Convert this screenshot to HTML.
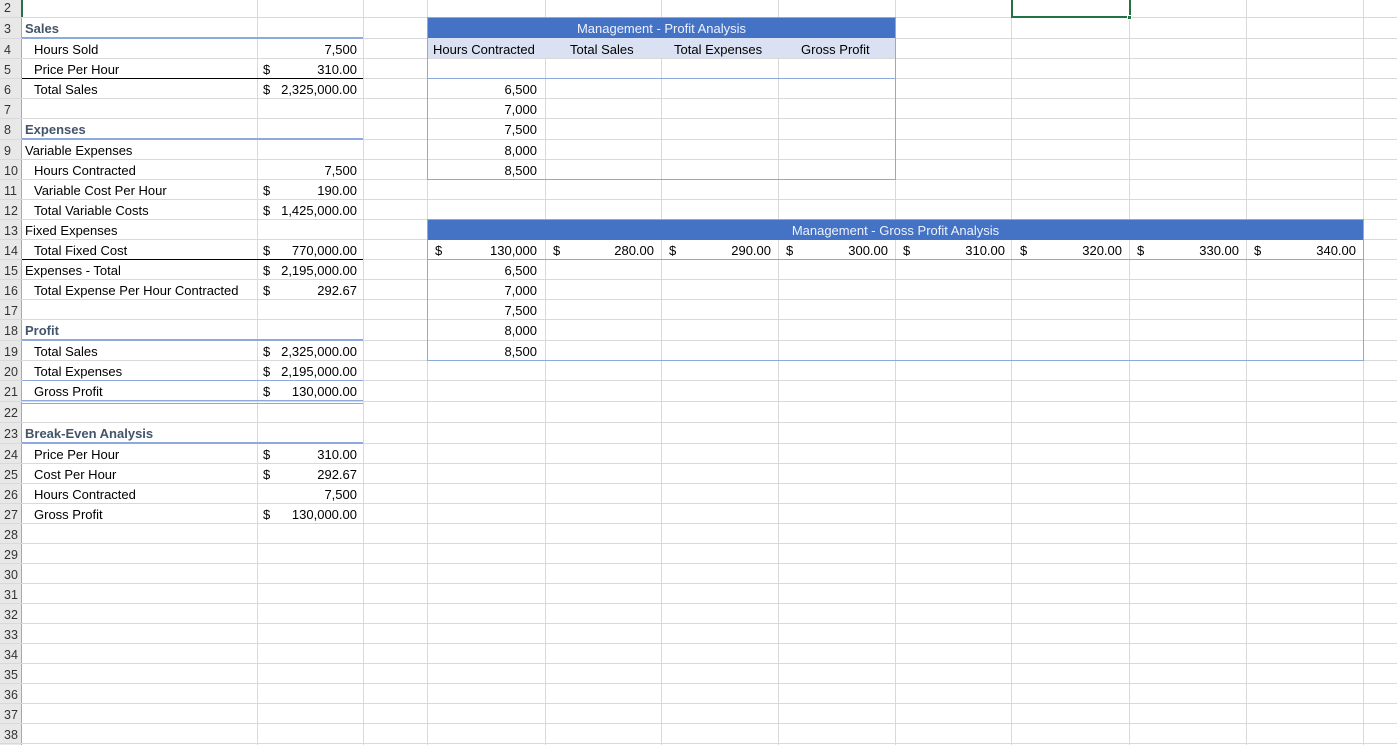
<!DOCTYPE html>
<html><head><meta charset="utf-8"><style>
body{margin:0;width:1397px;height:745px;overflow:hidden;background:#fff;position:relative;font-family:"Liberation Sans",sans-serif;font-size:13px;color:#000}
div{position:absolute;box-sizing:border-box}
.h{left:0;width:1397px;height:1px;background:#d9d9d9}
.v{top:0;width:1px;height:745px;background:#d9d9d9}
.t{height:20px;line-height:22px;white-space:nowrap}
.r{text-align:right}
.rh{left:0;width:22px;padding-left:4px;color:#333;height:20px;line-height:22px;font-size:12.5px}
.hd{color:#44546a;font-weight:bold}
.bl{height:2px;background:#8ea9db}
</style></head><body>
<div style="left:0;top:0;width:22px;height:745px;background:#e8e8e8;border-right:1px solid #a8a8a8"></div>
<div class="h" style="top:17px"></div><div class="h" style="top:38px"></div><div class="h" style="top:58px"></div><div class="h" style="top:78px"></div><div class="h" style="top:98px"></div><div class="h" style="top:118px"></div><div class="h" style="top:139px"></div><div class="h" style="top:159px"></div><div class="h" style="top:179px"></div><div class="h" style="top:199px"></div><div class="h" style="top:219px"></div><div class="h" style="top:239px"></div><div class="h" style="top:259px"></div><div class="h" style="top:279px"></div><div class="h" style="top:299px"></div><div class="h" style="top:319px"></div><div class="h" style="top:340px"></div><div class="h" style="top:360px"></div><div class="h" style="top:380px"></div><div class="h" style="top:401px"></div><div class="h" style="top:422px"></div><div class="h" style="top:443px"></div><div class="h" style="top:463px"></div><div class="h" style="top:483px"></div><div class="h" style="top:503px"></div><div class="h" style="top:523px"></div><div class="h" style="top:543px"></div><div class="h" style="top:563px"></div><div class="h" style="top:583px"></div><div class="h" style="top:603px"></div><div class="h" style="top:623px"></div><div class="h" style="top:643px"></div><div class="h" style="top:663px"></div><div class="h" style="top:683px"></div><div class="h" style="top:703px"></div><div class="h" style="top:723px"></div><div class="h" style="top:743px"></div>
<div class="v" style="left:257px"></div><div class="v" style="left:363px"></div><div class="v" style="left:427px"></div><div class="v" style="left:545px"></div><div class="v" style="left:661px"></div><div class="v" style="left:778px"></div><div class="v" style="left:895px"></div><div class="v" style="left:1011px"></div><div class="v" style="left:1129px"></div><div class="v" style="left:1246px"></div><div class="v" style="left:1363px"></div>
<div style="left:21px;top:0;width:2px;height:17px;background:#217346"></div>

<div class="rh" style="top:-3px">2</div><div class="rh" style="top:18px">3</div><div class="rh" style="top:39px">4</div><div class="rh" style="top:59px">5</div><div class="rh" style="top:79px">6</div><div class="rh" style="top:99px">7</div><div class="rh" style="top:119px">8</div><div class="rh" style="top:140px">9</div><div class="rh" style="top:160px">10</div><div class="rh" style="top:180px">11</div><div class="rh" style="top:200px">12</div><div class="rh" style="top:220px">13</div><div class="rh" style="top:240px">14</div><div class="rh" style="top:260px">15</div><div class="rh" style="top:280px">16</div><div class="rh" style="top:300px">17</div><div class="rh" style="top:320px">18</div><div class="rh" style="top:341px">19</div><div class="rh" style="top:361px">20</div><div class="rh" style="top:381px">21</div><div class="rh" style="top:402px">22</div><div class="rh" style="top:423px">23</div><div class="rh" style="top:444px">24</div><div class="rh" style="top:464px">25</div><div class="rh" style="top:484px">26</div><div class="rh" style="top:504px">27</div><div class="rh" style="top:524px">28</div><div class="rh" style="top:544px">29</div><div class="rh" style="top:564px">30</div><div class="rh" style="top:584px">31</div><div class="rh" style="top:604px">32</div><div class="rh" style="top:624px">33</div><div class="rh" style="top:644px">34</div><div class="rh" style="top:664px">35</div><div class="rh" style="top:684px">36</div><div class="rh" style="top:704px">37</div><div class="rh" style="top:724px">38</div>

<div class="bl" style="left:22px;width:341px;top:37px"></div>
<div style="left:22px;width:341px;top:78px;height:1px;background:#000"></div>
<div class="bl" style="left:22px;width:341px;top:138px"></div>
<div style="left:22px;width:341px;top:259px;height:1px;background:#000"></div>
<div class="bl" style="left:22px;width:341px;top:339px"></div>
<div style="left:22px;width:341px;top:380px;height:1px;background:#8ea9db"></div>
<div style="left:22px;width:341px;top:400px;height:1px;background:#8ea9db"></div>
<div style="left:22px;width:341px;top:403px;height:1px;background:#8ea9db"></div>
<div class="bl" style="left:22px;width:341px;top:442px"></div>

<div class="t hd" style="left:25px;top:18px">Sales</div>
<div class="t" style="left:34px;top:39px">Hours Sold</div><div class="t r" style="right:1040px;top:39px">7,500</div>
<div class="t" style="left:34px;top:59px">Price Per Hour</div><div class="t" style="left:263px;top:59px">$</div><div class="t r" style="right:1040px;top:59px">310.00</div>
<div class="t" style="left:34px;top:79px">Total Sales</div><div class="t" style="left:263px;top:79px">$</div><div class="t r" style="right:1040px;top:79px">2,325,000.00</div>
<div class="t hd" style="left:25px;top:119px">Expenses</div>
<div class="t" style="left:25px;top:140px">Variable Expenses</div>
<div class="t" style="left:34px;top:160px">Hours Contracted</div><div class="t r" style="right:1040px;top:160px">7,500</div>
<div class="t" style="left:34px;top:180px">Variable Cost Per Hour</div><div class="t" style="left:263px;top:180px">$</div><div class="t r" style="right:1040px;top:180px">190.00</div>
<div class="t" style="left:34px;top:200px">Total Variable Costs</div><div class="t" style="left:263px;top:200px">$</div><div class="t r" style="right:1040px;top:200px">1,425,000.00</div>
<div class="t" style="left:25px;top:220px">Fixed Expenses</div>
<div class="t" style="left:34px;top:240px">Total Fixed Cost</div><div class="t" style="left:263px;top:240px">$</div><div class="t r" style="right:1040px;top:240px">770,000.00</div>
<div class="t" style="left:25px;top:260px">Expenses - Total</div><div class="t" style="left:263px;top:260px">$</div><div class="t r" style="right:1040px;top:260px">2,195,000.00</div>
<div class="t" style="left:34px;top:280px">Total Expense Per Hour Contracted</div><div class="t" style="left:263px;top:280px">$</div><div class="t r" style="right:1040px;top:280px">292.67</div>
<div class="t hd" style="left:25px;top:320px">Profit</div>
<div class="t" style="left:34px;top:341px">Total Sales</div><div class="t" style="left:263px;top:341px">$</div><div class="t r" style="right:1040px;top:341px">2,325,000.00</div>
<div class="t" style="left:34px;top:361px">Total Expenses</div><div class="t" style="left:263px;top:361px">$</div><div class="t r" style="right:1040px;top:361px">2,195,000.00</div>
<div class="t" style="left:34px;top:381px">Gross Profit</div><div class="t" style="left:263px;top:381px">$</div><div class="t r" style="right:1040px;top:381px">130,000.00</div>
<div class="t hd" style="left:25px;top:423px">Break-Even Analysis</div>
<div class="t" style="left:34px;top:444px">Price Per Hour</div><div class="t" style="left:263px;top:444px">$</div><div class="t r" style="right:1040px;top:444px">310.00</div>
<div class="t" style="left:34px;top:464px">Cost Per Hour</div><div class="t" style="left:263px;top:464px">$</div><div class="t r" style="right:1040px;top:464px">292.67</div>
<div class="t" style="left:34px;top:484px">Hours Contracted</div><div class="t r" style="right:1040px;top:484px">7,500</div>
<div class="t" style="left:34px;top:504px">Gross Profit</div><div class="t" style="left:263px;top:504px">$</div><div class="t r" style="right:1040px;top:504px">130,000.00</div>

<div style="left:427px;top:17px;width:469px;height:21px;background:#4472c4;border-top:1px solid #8ea9db"></div>
<div style="left:427px;top:38px;width:469px;height:20px;background:#d9e1f2"></div>
<div class="t" style="left:427px;width:469px;top:18px;text-align:center;color:#eef2fb">Management - Profit Analysis</div>
<div class="t" style="left:433px;top:39px">Hours Contracted</div>
<div class="t" style="left:570px;top:39px">Total Sales</div>
<div class="t" style="left:674px;top:39px">Total Expenses</div>
<div class="t" style="left:801px;top:39px">Gross Profit</div>
<div style="left:427px;top:18px;width:1px;height:162px;background:#8ea9db"></div>
<div style="left:895px;top:18px;width:1px;height:162px;background:#8ea9db"></div>
<div style="left:427px;top:78px;width:469px;height:1px;background:#8ea9db"></div>
<div style="left:427px;top:179px;width:469px;height:1px;background:#8ea9db"></div>
<div class="t r" style="right:860px;top:79px">6,500</div>
<div class="t r" style="right:860px;top:99px">7,000</div>
<div class="t r" style="right:860px;top:119px">7,500</div>
<div class="t r" style="right:860px;top:140px">8,000</div>
<div class="t r" style="right:860px;top:160px">8,500</div>

<div style="left:427px;top:219px;width:937px;height:21px;background:#4472c4;border-top:1px solid #8ea9db"></div>
<div class="t" style="left:427px;width:937px;top:220px;text-align:center;color:#eef2fb">Management - Gross Profit Analysis</div>
<div style="left:427px;top:219px;width:1px;height:142px;background:#8ea9db"></div>
<div style="left:1363px;top:219px;width:1px;height:142px;background:#8ea9db"></div>
<div style="left:427px;top:259px;width:937px;height:1px;background:#8ea9db"></div>
<div style="left:427px;top:360px;width:937px;height:1px;background:#8ea9db"></div>
<div class="t" style="left:435px;top:240px">$</div><div class="t r" style="right:860px;top:240px">130,000</div>
<div class="t" style="left:553px;top:240px">$</div><div class="t r" style="right:743px;top:240px">280.00</div>
<div class="t" style="left:669px;top:240px">$</div><div class="t r" style="right:626px;top:240px">290.00</div>
<div class="t" style="left:786px;top:240px">$</div><div class="t r" style="right:509px;top:240px">300.00</div>
<div class="t" style="left:903px;top:240px">$</div><div class="t r" style="right:392px;top:240px">310.00</div>
<div class="t" style="left:1020px;top:240px">$</div><div class="t r" style="right:275px;top:240px">320.00</div>
<div class="t" style="left:1137px;top:240px">$</div><div class="t r" style="right:158px;top:240px">330.00</div>
<div class="t" style="left:1254px;top:240px">$</div><div class="t r" style="right:41px;top:240px">340.00</div>
<div class="t r" style="right:860px;top:260px">6,500</div>
<div class="t r" style="right:860px;top:280px">7,000</div>
<div class="t r" style="right:860px;top:300px">7,500</div>
<div class="t r" style="right:860px;top:320px">8,000</div>
<div class="t r" style="right:860px;top:341px">8,500</div>

<div style="left:1011px;top:-3px;width:120px;height:21px;border:2px solid #217346"></div>
<div style="left:1127px;top:15px;width:5px;height:5px;background:#217346;border:1px solid #fff"></div>
</body></html>
